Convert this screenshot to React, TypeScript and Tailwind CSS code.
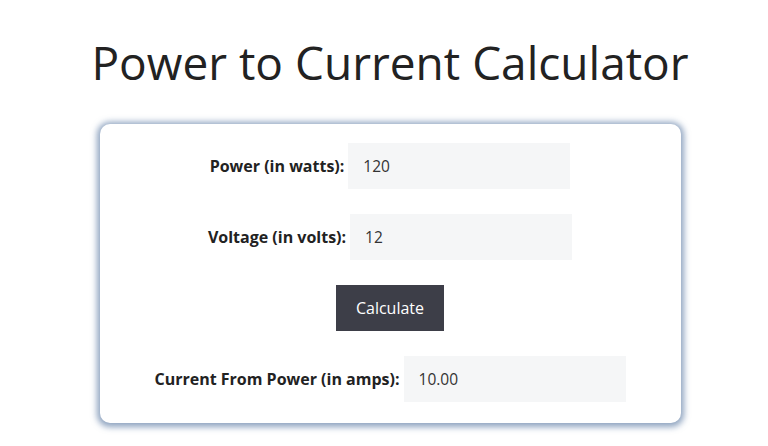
import React from 'react'

const FONT = { fontFamily: '"Open Sans", "Noto Sans", Arial, sans-serif' }

function Field({ label, value }: { label: string; value: string }) {
  return (
    <div className="flex items-center justify-center gap-[4px]">
      <label className="text-[16px] font-bold text-[#222]">{label}</label>
      <input
        readOnly
        value={value}
        className="h-[46px] w-[222px] bg-[#f5f6f7] px-[15px] text-[15.5px] text-[#333] outline-none"
      />
    </div>
  )
}

export default function App() {
  return (
    <div className="min-h-[446px] w-full bg-white pl-[12px]" style={FONT}>
      <h1 className="pt-[30px] text-center text-[46px] leading-[64px] font-normal text-[#222]">
        Power to Current Calculator
      </h1>
      <div className="mx-auto mt-[30px] flex w-[581px] flex-col items-center gap-[25px] rounded-[10px] bg-white pt-[19px] pb-[21px] shadow-[0_1px_6px_3px_rgba(95,125,165,0.7)]">
        <Field label="Power (in watts):" value="120" />
        <Field label="Voltage (in volts):" value="12" />
        <button className="h-[46px] w-[108px] bg-[#3d3e48] text-[16px] text-white">Calculate</button>
        <Field label="Current From Power (in amps):" value="10.00" />
      </div>
    </div>
  )
}
